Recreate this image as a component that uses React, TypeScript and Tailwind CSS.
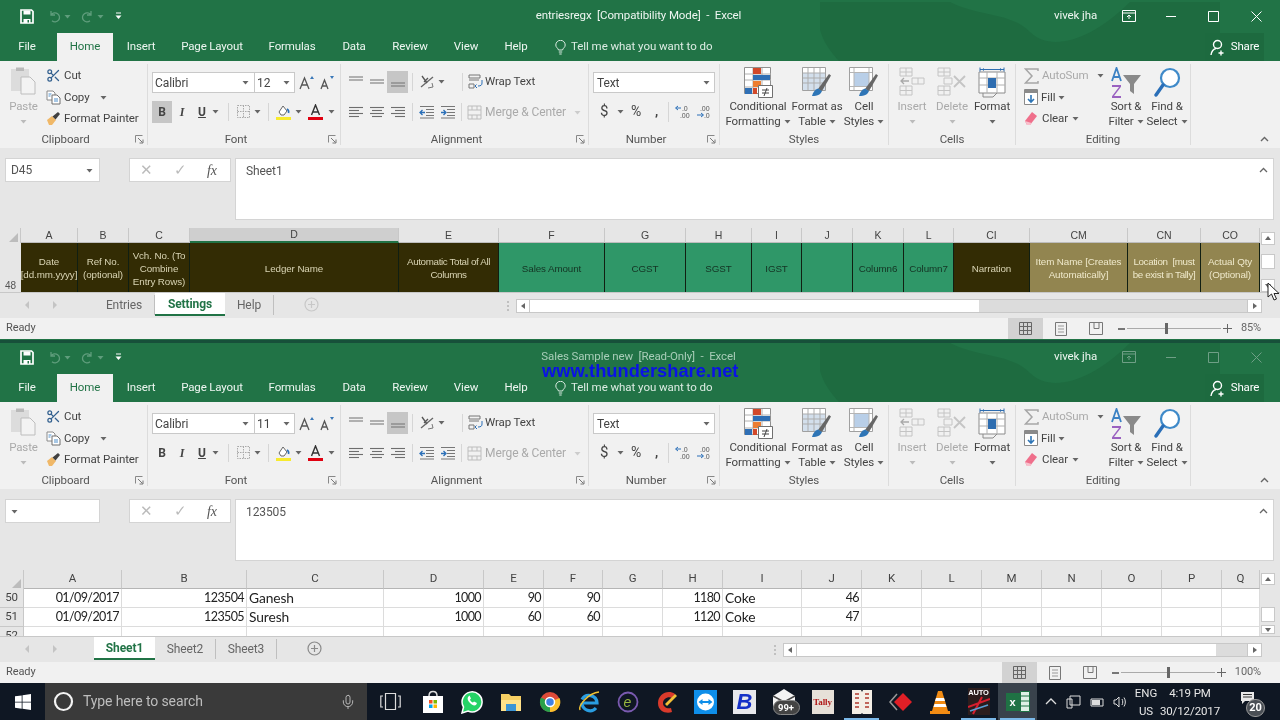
import React from "react";
import { Scissors, Mic } from "lucide-react";

const Caret = ({ c = "#666" }: { c?: string }) => (
  <svg width="7" height="5" viewBox="0 0 7 5" className="shrink-0"><path d="M0.5 1h6L3.5 4.5z" fill={c} /></svg>
);
const Launcher = () => (
  <svg width="9" height="9" viewBox="0 0 9 9" className="shrink-0"><path d="M.5.5h7M.5.5v7" stroke="#888" fill="none" /><path d="M3 3l4.5 4.5M4.5 8h3.5V4.5" stroke="#777" fill="none" /></svg>
);

const Lines = ({ kind, w = 16 }: { kind: string; w?: number }) => {
  const rows: Record<string, [number, number][]> = {
    l: [[1, 15], [1, 11], [1, 15], [1, 11]],
    c: [[1, 15], [3, 13], [1, 15], [3, 13]],
    r: [[1, 15], [5, 15], [1, 15], [5, 15]],
  };
  return (
    <svg width={w} height="14" viewBox="0 0 16 14" className="shrink-0">
      {rows[kind].map((r, i) => <path key={i} d={`M${r[0]} ${2.5 + i * 3}H${r[1]}`} stroke="#6e6e6e" strokeWidth="1.1" />)}
    </svg>
  );
};
const VAlign = ({ pos }: { pos: number }) => (
  <svg width="16" height="16" viewBox="0 0 16 16" className="shrink-0">
    <path d={`M1 ${pos}H15M1 ${pos + 3}H15`} stroke="#707070" strokeWidth="1.2" />
  </svg>
);
const Indent = ({ right }: { right?: boolean }) => (
  <svg width="16" height="14" viewBox="0 0 16 14" className="shrink-0">
    <path d="M1 1.5H15M7 4.5H15M7 7.5H15M7 10.5H15M1 13H15" stroke="#777" />
    {right ? <path d="M1 7.5H5M3.5 5l2.5 2.5L3.5 10" stroke="#2a6fb8" strokeWidth="1.3" fill="none" /> : <path d="M6 7.5H1.5M3.5 5L1 7.5 3.5 10" stroke="#2a6fb8" strokeWidth="1.3" fill="none" />}
  </svg>
);
const Save = () => (
  <svg width="14" height="15" viewBox="0 0 14 15"><path d="M1 1h10.5L13 2.5V14H1z" fill="none" stroke="#fff" strokeWidth="1.7" /><path d="M3.5 1.5h7v4h-7zM3.5 10h7v4h-7z" fill="#fff" /><path d="M7.5 11h1.5v2.5H7.5z" fill="#217346" /></svg>
);
const Undo = ({ flip }: { flip?: boolean }) => (
  <svg width="13" height="13" viewBox="0 0 13 13" className={flip ? "-scale-x-100" : ""}><path d="M3 1v4h4M3.2 5A4.5 4.5 0 1 1 4 10.7" fill="none" stroke="#5f9d7c" strokeWidth="1.3" /></svg>
);
const Qat = () => (
  <svg width="7" height="8" viewBox="0 0 7 8"><path d="M1 1h5" stroke="#fff" /><path d="M.5 3.5h6L3.5 7z" fill="#fff" /></svg>
);
const Bulb = () => (
  <svg width="11" height="15" viewBox="0 0 11 15" className="shrink-0"><path d="M3.5 10C3 8 .8 7.5.8 5a4.7 4.7 0 0 1 9.4 0c0 2.5-2.2 3-2.7 5zM3.8 12h3.4M4.3 14h2.4" fill="none" stroke="#dcece3" /></svg>
);
const Person = () => (
  <svg width="16" height="17" viewBox="0 0 16 17" className="shrink-0"><circle cx="7.5" cy="5.5" r="4" fill="none" stroke="#fff" strokeWidth="1.4" /><path d="M1 16c.3-3.5 2.7-6.2 5-6.5M11 11.5v5M8.5 14h5" fill="none" stroke="#fff" strokeWidth="1.4" /></svg>
);
const PasteIcon = () => (
  <svg width="28" height="30" viewBox="0 0 28 30"><path d="M1 3h18v22H1z" fill="#dcdcdc" /><path d="M6 1.5h8V5H6z" fill="#b9b9b9" /><path d="M11 11h9l5 5v12H11z" fill="#f3f3f3" stroke="#bdbdbd" /></svg>
);
const CopyIcon = () => (
  <svg width="15" height="15" viewBox="0 0 15 15" className="shrink-0"><path d="M1 1h6l2 2v7H1z" fill="#fff" stroke="#8a8a8a" /><path d="M6 5h5l3 3v6H6z" fill="#fff" stroke="#6f6f6f" /><path d="M8 9h4M8 11h4M2.500 4h3M2.500 6h2" stroke="#4f8fcb" /></svg>
);
const Painter = () => (
  <svg width="15" height="15" viewBox="0 0 15 15" className="shrink-0"><path d="M1 9l5-4 4 4-4 5H3z" fill="#f0b868" /><path d="M6.500 5.500L12 1l2 2-4.500 5.500z" fill="#404040" /></svg>
);
const Borders = () => (
  <svg width="15" height="15" viewBox="0 0 15 15" className="shrink-0"><path d="M1.500 1.500h12v12h-12z" fill="none" stroke="#a9a9a9" strokeDasharray="1.500 1" /><path d="M7.500 1.500v12M1.500 7.500h12" stroke="#a9a9a9" strokeDasharray="1.500 1" /></svg>
);
const Fill = () => (
  <svg width="15" height="16" viewBox="0 0 15 16" className="shrink-0"><path d="M3 8l4-6 4 5-3 4H5z" fill="#fff" stroke="#666" /><path d="M11 5c1.500 1 2 2.500 1.500 4" stroke="#2a6fb8" strokeWidth="1.6" fill="none" /><path d="M0 13h15v3H0z" fill="#f7ea2d" /></svg>
);
const FontColor = () => (
  <svg width="15" height="16" viewBox="0 0 15 16" className="shrink-0"><path d="M3.500 11L7.500 1l4 10M5 8h5" fill="none" stroke="#333" strokeWidth="1.400" /><path d="M0 13h15v3H0z" fill="#e00010" /></svg>
);
const GrowA = ({ up }: { up?: boolean }) => (
  <svg width="16" height="15" viewBox="0 0 16 15" className="shrink-0"><path d={up ? "M1 14L5.500 3 10 14M3 10h5" : "M2 14L5.500 5 9 14M3.500 11h4"} fill="none" stroke="#555" strokeWidth="1.300" /><path d={up ? "M11 4l2-3 2 3z" : "M11 1l2 3 2-3z"} fill="#3a78b8" /></svg>
);
const Orient = () => (
  <svg width="16" height="16" viewBox="0 0 16 16" className="shrink-0"><path d="M2 13L14 3" stroke="#666" strokeWidth="1.300" /><path d="M3 2l5 7M5 8l4-4" stroke="#555" strokeWidth="1.300" /><path d="M9 14l5-1-1-4" stroke="#777" fill="none" /></svg>
);
const WrapIcon = () => (
  <svg width="16" height="15" viewBox="0 0 16 15" className="shrink-0"><path d="M1 1h11v3H1zM1 6h10M1 10h5v4H1z" fill="none" stroke="#777" /><path d="M10 12c3 0 4-1 4-3V6M8.500 10.500L7 12l2 2" fill="none" stroke="#2a6fb8" /></svg>
);
const MergeIcon = () => (
  <svg width="15" height="15" viewBox="0 0 15 15" className="shrink-0"><path d="M1 1h13v13H1zM1 5h13M1 10h13M5 1v4M10 1v4M5 10v4M10 10v4" fill="none" stroke="#bdbdbd" /></svg>
);
const DecLeft = () => (
  <svg width="18" height="15" viewBox="0 0 18 15" className="shrink-0"><text x="8" y="6.500" fontSize="7" fill="#555" fontFamily="Liberation Sans">.0</text><text x="6" y="14" fontSize="7" fill="#555" fontFamily="Liberation Sans">.00</text><path d="M7 4H2M4 2L1.500 4 4 6" stroke="#2a6fb8" fill="none" /></svg>
);
const DecRight = () => (
  <svg width="18" height="15" viewBox="0 0 18 15" className="shrink-0"><text x="5" y="6.500" fontSize="7" fill="#555" fontFamily="Liberation Sans">.00</text><text x="9" y="14" fontSize="7" fill="#555" fontFamily="Liberation Sans">.0</text><path d="M2 11h6M6 9l2.500 2L6 13" stroke="#2a6fb8" fill="none" /></svg>
);
const CF = () => (
  <svg width="29" height="31" viewBox="0 0 29 31">
    <path d="M.5.5h26v26H.5z" fill="#fff" stroke="#909090" />
    <path d="M9 1v26M18 1v26M1 7h26M1 13h26M1 20h26" stroke="#b0b0b0" />
    <path d="M9 1h8v6H9z" fill="#d2492a" /><path d="M9 8h17v5H9z" fill="#2f6fb5" /><path d="M9 14h8v6H9z" fill="#ed7d31" /><path d="M9 21h4v6H9z" fill="#d2492a" /><path d="M1 21h7v6H1z" fill="#2f6fb5" />
    <path d="M14.500 18.500h14v12h-14z" fill="#fff" stroke="#707070" /><path d="M18 23h7M18 26h7M23 21l-3 8" stroke="#444" />
  </svg>
);
const TableBrush = ({ cell }: { cell?: boolean }) => (
  <svg width="30" height="30" viewBox="0 0 30 30">
    <path d="M.5.500h23v23H.5z" fill="#fff" stroke="#a0a0a0" />
    {cell ? <path d="M5 6h15v13H5z" fill="#b9cfe8" /> : <path d="M1 6h22v17H1z" fill="#d3dfec" />}
    {cell ? <path d="M1 5.500h22M1 19.500h22M5 1v22M20 1v22" stroke="#b5b5b5" /> : <path d="M1 6h22M1 11h22M1 16h22M6 1v22M12 1v22M18 1v22" stroke="#adadad" />}
    <path d="M16 22L27 7l2 1.500L20 24z" fill="#666" />
    <path d="M10 29c1-4 3-6.500 6-7.500l4 2.500c-1 3-4 5-10 5z" fill="#2e75b6" />
  </svg>
);
const InsertI = () => (
  <svg width="26" height="29" viewBox="0 0 26 29"><path d="M1 1h12v8H1zM1 5h12M7 1v8M1 19h12v9H1zM1 23.500h12M7 19v9M13 11h12v6H13zM19 11v6" fill="none" stroke="#c4c4c4" /><path d="M10 14H2M5 11l-3 3 3 3" fill="none" stroke="#a9a9a9" strokeWidth="1.300" /></svg>
);
const DeleteI = () => (
  <svg width="30" height="29" viewBox="0 0 30 29"><path d="M1 1h12v8H1zM1 5h12M7 1v8M1 19h12v9H1zM1 23.500h12M7 19v9M7 11h8v6H7z" fill="none" stroke="#c4c4c4" /><path d="M17 9l11 11M28 9L17 20" stroke="#c4c4c4" strokeWidth="1.800" /></svg>
);
const FormatI = () => (
  <svg width="28" height="32" viewBox="0 0 28 32"><path d="M1 5h26v21H1z" fill="#fff" stroke="#8b8b8b" /><path d="M9 5v21M19 5v21M1 11h26M1 18h26" stroke="#b0b0b0" /><path d="M10 11h8v10h-8z" fill="#2e6db0" /><path d="M2 2.500h24M2 .5v4M26 .5v4" stroke="#2e6db0" /><path d="M4 2.500l2-1.500v3zM24 2.500l-2-1.500v3z" fill="#2e6db0" /><path d="M5 26v4h10l4-4" fill="none" stroke="#8b8b8b" /></svg>
);
const Sigma = () => (
  <svg width="15" height="16" viewBox="0 0 15 16" className="shrink-0"><path d="M14 3V1H1.500L8 8 1.500 15H14v-2" fill="none" stroke="#a6a6a6" strokeWidth="1.500" /></svg>
);
const FillDown = () => (
  <svg width="14" height="16" viewBox="0 0 14 16" className="shrink-0"><path d="M.5.5h13v15H.5z" fill="#fff" stroke="#8a8a8a" /><path d="M1 1h12v3H1z" fill="#8a8a8a" /><path d="M7 6v7M4 10l3 3 3-3" fill="none" stroke="#2e75b6" strokeWidth="1.600" /></svg>
);
const Eraser = () => (
  <svg width="14" height="15" viewBox="0 0 14 15" className="shrink-0"><path d="M1 10l7-9 5 4-7 9H3z" fill="#ef6f8b" /><path d="M1 10l2 4h3l1.500-2z" fill="#f8c0cc" /></svg>
);
const SortI = () => (
  <svg width="32" height="32" viewBox="0 0 32 32"><path d="M2 14L6.500 1 11 14M3.500 10h6" fill="none" stroke="#3c82c4" strokeWidth="1.800" /><path d="M2 18h9v1.800L4 29h7v2H2v-1.800L9 20H2z" fill="#9a62c0" /><path d="M13 8h18l-7 9v10l-4-3v-7z" fill="#8a8a8a" /></svg>
);
const FindI = () => (
  <svg width="27" height="32" viewBox="0 0 27 32"><circle cx="16" cy="11" r="9" fill="#fff" stroke="#3f8ac9" strokeWidth="2.200" /><path d="M9 18L2 28" stroke="#2a6fb8" strokeWidth="3.400" strokeLinecap="round" /></svg>
);

function Group({ w, label, launcher, children }: { w: string; label: string; launcher?: boolean; children: React.ReactNode }) {
  return (
    <div className={`${w} shrink-0 border-r border-[#dcdcdc] mt-[3px] mb-[3px] flex flex-col`}>
      <div className="h-[70px] shrink-0">{children}</div>
      <div className="h-[11px] shrink-0 flex items-center relative">
        <div className={`flex-1 text-center text-[#555] text-[11.5px] leading-none ${launcher ? "pr-[16px]" : ""}`}>{label}</div>
        {launcher ? <div className="absolute right-[3px] top-[1px]"><Launcher /></div> : null}
      </div>
    </div>
  );
}

function Big({ w, icon, l1, l2, caret, muted }: { w: string; icon: React.ReactNode; l1: string; l2?: string; caret?: boolean; muted?: boolean }) {
  const color = muted ? "text-[#aaa]" : "text-[#444]";
  return (
    <div className={`${w} flex flex-col items-center`}>
      <div className="h-[35px] pt-[3px] flex items-start justify-center">{icon}</div>
      <div className={`${color} text-[11.5px] leading-[15px] h-[15px] whitespace-nowrap`}>{l1}</div>
      <div className={`${color} text-[11.5px] leading-[15px] h-[15px] whitespace-nowrap flex items-center gap-[3px]`}>
        {l2}{caret ? <Caret c={muted ? "#bbb" : "#666"} /> : null}
      </div>
    </div>
  );
}

function Ribbon({ size, bold }: { size: string; bold?: boolean }) {
  return (
    <div className="h-[87px] bg-[#f1f1f1] flex text-[#444] relative">
      <Group w="w-[148px]" label="Clipboard" launcher>
        <div className="flex h-full">
          <div className="w-[46px] flex flex-col items-center pl-[1px] pt-[2px]">
            <PasteIcon />
            <div className="text-[#aaa] text-[11.5px] leading-[15px] mt-[3px]">Paste</div>
            <div className="mt-[5px]"><Caret c="#bbb" /></div>
          </div>
          <div className="flex-1 flex flex-col pt-[1px]">
            <div className="h-[21.500px] flex items-center gap-[3px] text-[11.500px]"><Scissors size={15} color="#33608f" />Cut</div>
            <div className="h-[21.500px] flex items-center gap-[3px] text-[11.500px]"><CopyIcon />Copy<span className="ml-[8px]"><Caret /></span></div>
            <div className="h-[21.500px] flex items-center gap-[3px] text-[11.500px] whitespace-nowrap"><Painter />Format Painter</div>
          </div>
        </div>
      </Group>
      <Group w="w-[193px]" label="Font" launcher>
        <div className="pl-[4px]">
          <div className="h-[30px] pt-[7px] flex items-center">
            <div className="w-[103px] h-[21px] bg-white border border-[#c9c9c9] flex items-center justify-between px-[2px] pr-[5px] text-[12px]">Calibri<Caret /></div>
            <div className="w-[40px] h-[21px] bg-white border border-l-0 border-[#c9c9c9] flex items-center justify-between pl-[2px] pr-[4px] text-[12px]">{size}<Caret /></div>
            <div className="ml-[4px]"><GrowA up /></div>
            <div className="ml-[4px]"><GrowA /></div>
          </div>
          <div className="h-[33px] flex items-center pt-[2px]">
            <div className={`w-[20px] h-[22px] flex items-center justify-center font-bold text-[12px] ${bold ? "bg-[#c6c6c6]" : ""}`}>B</div>
            <div className="w-[20px] text-center italic font-bold text-[12px] font-['Liberation_Serif',serif]">I</div>
            <div className="w-[20px] text-center underline font-bold text-[12px]">U</div>
            <div className="w-[9px]"><Caret /></div>
            <div className="w-px h-[18px] bg-[#d6d6d6] mx-[7px]" />
            <Borders />
            <div className="ml-[3px]"><Caret /></div>
            <div className="w-px h-[18px] bg-[#d6d6d6] mx-[7px]" />
            <Fill />
            <div className="ml-[4px]"><Caret /></div>
            <div className="ml-[6px]"><FontColor /></div>
            <div className="ml-[5px]"><Caret /></div>
          </div>
        </div>
      </Group>
      <Group w="w-[248px]" label="Alignment" launcher>
        <div className="pl-[4px]">
          <div className="h-[30px] pt-[5px] flex items-center">
            <div className="w-[21px] flex justify-center"><VAlign pos={3} /></div>
            <div className="w-[21px] flex justify-center"><VAlign pos={6} /></div>
            <div className="w-[21px] h-[22px] bg-[#c6c6c6] flex justify-center items-center"><VAlign pos={9} /></div>
            <div className="w-px h-[18px] bg-[#d6d6d6] ml-[4px] mr-[6px]" />
            <Orient />
            <div className="ml-[3px]"><Caret /></div>
            <div className="w-px h-[18px] bg-[#d6d6d6] ml-[17px] mr-[5px]" />
            <WrapIcon />
            <span className="text-[11.500px] ml-[1px]">Wrap Text</span>
          </div>
          <div className="h-[33px] pt-[3px] flex items-center">
            <div className="w-[21px] flex justify-center"><Lines kind="l" /></div>
            <div className="w-[21px] flex justify-center"><Lines kind="c" /></div>
            <div className="w-[21px] flex justify-center"><Lines kind="r" /></div>
            <div className="w-px h-[18px] bg-[#d6d6d6] ml-[4px] mr-[6px]" />
            <Indent />
            <div className="ml-[5px]"><Indent right /></div>
            <div className="w-px h-[18px] bg-[#d6d6d6] ml-[5px] mr-[5px]" />
            <MergeIcon />
            <span className="text-[12px] text-[#aaa] ml-[3px] whitespace-nowrap">Merge &amp; Center</span>
            <span className="ml-[8px]"><Caret c="#ccc" /></span>
          </div>
        </div>
      </Group>
      <Group w="w-[131px]" label="Number" launcher>
        <div className="pl-[4px]">
          <div className="h-[30px] pt-[7px] flex items-center">
            <div className="w-[122px] h-[21px] bg-white border border-[#c9c9c9] flex items-center justify-between px-[3px] pr-[4px] text-[12px]">Text<Caret /></div>
          </div>
          <div className="h-[33px] pt-[2px] flex items-center">
            <span className="ml-[7px] text-[15px] w-[11px]">$</span>
            <span className="ml-[6px]"><Caret /></span>
            <span className="ml-[7px] text-[14px] w-[14px]">%</span>
            <span className="ml-[10px] w-[4px] font-bold text-[13px] leading-none">,</span>
            <div className="w-px h-[20px] bg-[#d6d6d6] ml-[9px] mr-[5px]" />
            <DecLeft />
            <span className="ml-[3px]"><DecRight /></span>
          </div>
        </div>
      </Group>
      <Group w="w-[169px]" label="Styles">
        <div className="flex pl-[4px]">
          <Big w="w-[68px]" icon={<CF />} l1="Conditional" l2="Formatting" caret />
          <Big w="w-[50px]" icon={<TableBrush />} l1="Format as" l2="Table" caret />
          <Big w="w-[44px]" icon={<TableBrush cell />} l1="Cell" l2="Styles" caret />
        </div>
      </Group>
      <Group w="w-[127px]" label="Cells">
        <div className="flex pl-[3px]">
          <Big w="w-[40px]" icon={<InsertI />} l1="Insert" caret muted />
          <Big w="w-[40px]" icon={<DeleteI />} l1="Delete" caret muted />
          <Big w="w-[40px]" icon={<FormatI />} l1="Format" caret />
        </div>
      </Group>
      <Group w="w-[175px]" label="Editing">
        <div className="flex pl-[8px]">
          <div className="w-[82px] flex flex-col text-[11.500px] pt-[1px]">
            <div className="h-[21.500px] flex items-center gap-[3px] text-[#aaa]"><Sigma />AutoSum<span className="ml-[5px]"><Caret /></span></div>
            <div className="h-[21.500px] flex items-center gap-[3px]"><FillDown />Fill<Caret /></div>
            <div className="h-[21.500px] flex items-center gap-[4px]"><Eraser />Clear<Caret /></div>
          </div>
          <Big w="w-[40px]" icon={<SortI />} l1="Sort &" l2="Filter" caret />
          <Big w="w-[42px]" icon={<FindI />} l1="Find &" l2="Select" caret />
        </div>
      </Group>
      <div className="flex-1 flex items-end justify-end pr-[11px] pb-[6px]">
        <svg width="9" height="6" viewBox="0 0 9 6"><path d="M1 5l3.500-3.500L8 5" fill="none" stroke="#666" strokeWidth="1.400" /></svg>
      </div>
    </div>
  );
}

function TitleBar({ title, inactive }: { title: string; inactive?: boolean }) {
  const icon = inactive ? "#6f9f86" : "#ffffff";
  return (
    <div className="h-[31px] flex items-center pb-[3px] text-[11.5px] relative">
      <svg className="absolute left-[820px] top-0 pointer-events-none" width="400" height="60" viewBox="0 0 400 60">
        <path d="M0 0h130c30 15 60 10 80 30 20 20 60 10 100-30h90v60H20C0 40-5 20 0 0z" fill="#1e6b40" />
      </svg>
      <div className="w-[130px] shrink-0 flex items-center pl-[20px] relative">
        <Save />
        <span className="ml-[14px]"><Undo /></span><span className="ml-[3px]"><Caret c="#5f9d7c" /></span>
        <span className="ml-[10px]"><Undo flip /></span><span className="ml-[3px]"><Caret c="#5f9d7c" /></span>
        <span className="ml-[11px]"><Qat /></span>
      </div>
      <div className={`flex-1 pl-[102px] text-center relative whitespace-pre ${inactive ? "text-[#a8cdb8]" : "text-[#eef6f1]"}`}>{title}</div>
      <div className="w-[235px] shrink-0 flex items-center relative text-[#eef6f1]">
        <span className="ml-[9px] w-[51px]">vivek jha</span>
        <svg className="ml-[17px]" width="14" height="12" viewBox="0 0 14 12"><path d="M.5.5h13v11H.5zM1 3h12" fill="none" stroke={icon} /><path d="M7 9V5M5 7l2-2 2 2" fill="none" stroke={icon} /></svg>
        <svg className="ml-[29px]" width="12" height="3" viewBox="0 0 12 3"><path d="M1 1.500h10" stroke={icon} /></svg>
        <svg className="ml-[31px]" width="11" height="11" viewBox="0 0 11 11"><path d="M.5.5h10v10H.5z" fill="none" stroke={icon} /></svg>
        <svg className="ml-[32px]" width="11" height="11" viewBox="0 0 11 11"><path d="M.5.5l10 10M10.500.5l-10 10" stroke={icon} /></svg>
      </div>
    </div>
  );
}

function TabRow() {
  const tabs: [string, string][] = [["Insert", "w-[56px]"], ["Page Layout", "w-[86px]"], ["Formulas", "w-[74px]"], ["Data", "w-[50px]"], ["Review", "w-[62px]"], ["View", "w-[50px]"], ["Help", "w-[50px]"]];
  return (
    <div className="h-[28px] flex items-stretch text-[11.500px] tracking-[-0.15px] text-[#eef6f1] relative">
      <div className="w-[57px] flex items-center justify-center pr-[3px]">File</div>
      <div className="w-[56px] flex items-center justify-center bg-[#f1f1f1] text-[#217346]">Home</div>
      {tabs.map(([t, w]) => <div key={t} className={`${w} flex items-center justify-center`}>{t}</div>)}
      <div className="ml-[14px] flex items-center gap-[5px] whitespace-nowrap"><Bulb /><span className="text-[#dcece3] tracking-[-0.05px]">Tell me what you want to do</span></div>
      <div className="flex-1" />
      <div className="w-[59px] mr-[16px] bg-[#1d6a3f] flex items-center justify-center gap-[5px] text-white"><Person />Share</div>
    </div>
  );
}

function FormulaArea({ name, value, h }: { name: string; value: string; h: string }) {
  return (
    <div className={`${h} bg-[#e6e6e6] pt-[10px] px-[5px] flex items-start text-[#555]`}>
      <div className="w-[95px] h-[24px] bg-white border border-[#d4d4d4] flex items-center justify-between px-[5px] pr-[6px] text-[12px]">{name}<Caret /></div>
      <div className="w-[102px] h-[24px] ml-[29px] bg-white border border-[#d4d4d4] flex items-center text-[#bbb]">
        <span className="ml-[10px] text-[15px] w-[10px]">✕</span>
        <span className="ml-[24px] text-[15px] w-[10px]">✓</span>
        <span className="ml-[23px] italic font-['Liberation_Serif',serif] text-[14px] text-[#555]">fx</span>
      </div>
      <div className="flex-1 h-[62px] ml-[4px] bg-white border border-[#d4d4d4] flex justify-between pl-[10px] pr-[5px] pt-[3px] text-[12px] text-[#555] mr-[1px]">
        <span>{value}</span>
        <svg className="mt-[5px]" width="9" height="6" viewBox="0 0 9 6"><path d="M1 5l3.500-3.500L8 5" fill="none" stroke="#666" strokeWidth="1.300" /></svg>
      </div>
    </div>
  );
}

function SheetArrow({ dir }: { dir: "u" | "d" | "l" | "r" }) {
  const d = { u: "M1 5h6L4 1z", d: "M1 1h6L4 5z", l: "M5 1v6L1 4z", r: "M1 1v6l4-3z" }[dir];
  const s = dir === "u" || dir === "d" ? [8, 6] : [6, 8];
  return <svg width={s[0]} height={s[1]} viewBox={`0 0 ${s[0]} ${s[1]}`}><path d={d} fill="#666" /></svg>;
}

function Corner() {
  return <svg width="9" height="9" viewBox="0 0 9 9"><path d="M9 0v9H0z" fill="#bcbcbc" /></svg>;
}

const W1Cols = ["A", "B", "C", "D", "E", "F", "G", "H", "I", "J", "K", "L", "CI", "CM", "CN", "CO"];
const W1Cells: [string, string][] = [
  ["Date\n[dd.mm.yyyy]", "d"], ["Ref No.\n(optional)", "d"], ["Vch. No. (To\nCombine\nEntry Rows)", "d"], ["Ledger Name", "d"], ["Automatic Total of All\nColumns", "d"],
  ["Sales Amount", "g"], ["CGST", "g"], ["SGST", "g"], ["IGST", "g"], ["", "g"], ["Column6", "g"], ["Column7", "g"],
  ["Narration", "d"], ["Item Name [Creates\nAutomatically]", "t"], ["Location\u00a0\u00a0[must\nbe exist in Tally]", "t"], ["Actual Qty\n(Optional)", "t"],
];

function Grid1() {
  return (
    <div className="h-[64px] flex bg-[#e6e6e6] relative">
      <div className="w-[1260px] grid grid-cols-[21px_57px_51px_61px_209px_100px_106px_81px_66px_50px_51px_51px_50px_76px_98px_73px_59px] grid-rows-[15px_49px]">
        <div className="flex items-end justify-end pr-[2px] pb-[1px] border-r border-[#c8c8c8]"><Corner /></div>
        {W1Cols.map((c) => (
          <div key={c} className={`flex items-center justify-center pt-[1px] text-[10.500px] text-[#444] font-['Liberation_Sans',sans-serif] border-r border-[#c8c8c8] ${c === "D" ? "bg-[#cfcfcf] border-b-2 border-b-[#217346]" : "border-b border-b-[#bdbdbd]"}`}>{c}</div>
        ))}
        <div className="flex items-end justify-center text-[10px] text-[#555] font-['Liberation_Sans',sans-serif] leading-none pb-[1px]">48</div>
        {W1Cells.map(([t, k], i) => (
          <div key={i} className={`flex items-center justify-center text-center pt-[1px] whitespace-pre-line text-[9.800px] leading-[13px] font-['Liberation_Sans',sans-serif] border-r border-[#111f12] ${t.startsWith("Automatic") || t.startsWith("Location") ? "tracking-[-0.35px]" : "tracking-[-0.1px]"} ${k === "d" ? "bg-[#332c04] text-[#d9d4b4]" : k === "g" ? "bg-[#2f9768] text-[#143323]" : "bg-[#928550] text-[#efe9cb]"}`}>{t}</div>
        ))}
      </div>
      <div className="flex-1 flex flex-col items-center pt-[4px] pr-[4px]">
        <div className="w-[14px] h-[13px] bg-white border border-[#c8c8c8] flex items-center justify-center"><SheetArrow dir="u" /></div>
        <div className="w-[14px] h-[16px] mt-[9px] bg-white border border-[#c8c8c8]" />
        <div className="w-[14px] h-[13px] mt-[10px] bg-white border border-[#c8c8c8] flex items-center justify-center"><SheetArrow dir="d" /></div>
      </div>
      <svg className="absolute left-[1267px] top-[54px] z-10" width="13" height="19" viewBox="0 0 13 19"><path d="M1 1v14l3.500-3 2.500 6 2.500-1-2.500-5.500h5z" fill="#fff" stroke="#222" /></svg>
    </div>
  );
}

const W2Cols = ["A", "B", "C", "D", "E", "F", "G", "H", "I", "J", "K", "L", "M", "N", "O", "P", "Q"];
const W2Rows: [string, string[]][] = [
  ["50", ["01/09/2017", "123504", "Ganesh", "1000", "90", "90", "", "1180", "Coke", "46", "", "", "", "", "", "", ""]],
  ["51", ["01/09/2017", "123505", "Suresh", "1000", "60", "60", "", "1120", "Coke", "47", "", "", "", "", "", "", ""]],
  ["52", ["", "", "", "", "", "", "", "", "", "", "", "", "", "", "", "", ""]],
];

function Grid2() {
  return (
    <div className="h-[66px] flex bg-[#e6e6e6] overflow-hidden">
      <div className="w-[1260px] grid grid-cols-[24px_98px_125px_137px_100px_60px_59px_60px_60px_79px_60px_60px_60px_60px_60px_60px_60px_38px] grid-rows-[19px_19px_19px_19px]">
        <div className="flex items-end justify-end pr-[2px] pb-[1px] border-r border-[#c8c8c8]"><Corner /></div>
        {W2Cols.map((c) => (
          <div key={c} className="flex items-center justify-center text-[11.500px] text-[#444] border-r border-[#c8c8c8] border-b border-b-[#b5b5b5]">{c}</div>
        ))}
        {W2Rows.map(([n, cells]) => (
          <React.Fragment key={n}>
            <div className="flex items-center justify-center text-[11.500px] text-[#444] border-r border-[#c8c8c8] border-b border-b-[#c8c8c8]">{n}</div>
            {cells.map((c, i) => (
              <div key={i} className={`bg-white border-r border-b border-[#dcdcdc] flex items-center text-[#222] font-['Lato',sans-serif] px-[2px] ${c === "Ganesh" || c === "Suresh" || c === "Coke" ? "justify-start text-[13.800px] tracking-[-0.1px]" : "justify-end text-[12.500px] tracking-[-0.6px]"}`}>{c}</div>
            ))}
          </React.Fragment>
        ))}
      </div>
      <div className="flex-1 flex flex-col items-center pt-[3px] pr-[4px]">
        <div className="w-[14px] h-[12px] bg-white border border-[#c8c8c8] flex items-center justify-center"><SheetArrow dir="u" /></div>
        <div className="w-[14px] h-[15px] mt-[22px] bg-white border border-[#c8c8c8]" />
        <div className="w-[14px] h-[9px] mt-[3px] bg-white border border-[#c8c8c8] flex items-center justify-center overflow-hidden"><SheetArrow dir="d" /></div>
      </div>
    </div>
  );
}

function SheetBar({ tabs, active, leftW, scrollW, thumbW, faded }: { tabs: string[]; active: string; leftW: string; scrollW: string; thumbW: string; faded?: boolean }) {
  return (
    <div className="h-[26px] bg-[#e6e6e6] flex items-center text-[12px] text-[#666] border-t border-[#c8c8c8]">
      <div className={`${leftW} shrink-0 flex items-stretch h-[23px] self-start`}>
        <div className="w-[94px] flex items-center pl-[25px] gap-[22px] text-[#bbb]">
          <svg width="5" height="8" viewBox="0 0 5 8"><path d="M4 0v8L0 4z" fill="#c4c4c4" /></svg>
          <svg width="5" height="8" viewBox="0 0 5 8"><path d="M1 0v8l4-4z" fill="#c4c4c4" /></svg>
        </div>
        {tabs.map((t) => (
          t === active ? (
            <div key={t} className={`${t === "Settings" ? "w-[70px]" : "w-[61px]"} bg-white border-b-2 border-[#217346] text-[#217346] font-bold flex items-center justify-center`}>{t}</div>
          ) : (
            <div key={t} className={`${t === "Help" ? "w-[49px]" : "w-[61px]"} flex items-center justify-center`}><span className="border-r border-[#bfbfbf] w-full text-center leading-[20px]">{t}</span></div>
          )
        ))}
        <div className="ml-[30px] flex items-center">
          <svg width="15" height="15" viewBox="0 0 15 15"><circle cx="7.500" cy="7.500" r="6.500" fill="none" stroke={faded ? "#c8c8c8" : "#8a8a8a"} strokeWidth="1.200" /><path d="M7.500 4v7M4 7.500h7" stroke={faded ? "#c8c8c8" : "#8a8a8a"} strokeWidth="1.200" /></svg>
        </div>
      </div>
      <div className="w-[16px] shrink-0 flex flex-col items-center gap-[2px]">
        <div className="w-[2px] h-[2px] bg-[#c0c0c0]" /><div className="w-[2px] h-[2px] bg-[#c0c0c0]" /><div className="w-[2px] h-[2px] bg-[#c0c0c0]" />
      </div>
      <div className={`${scrollW} shrink-0 h-[14px] flex bg-[#dcdcdc] border border-[#c8c8c8]`}>
        <div className="w-[13px] bg-white flex items-center justify-center border-r border-[#c8c8c8]"><SheetArrow dir="l" /></div>
        <div className={`${thumbW} bg-white`} />
        <div className="flex-1" />
        <div className="w-[14px] bg-white flex items-center justify-center border-l border-[#c8c8c8]"><SheetArrow dir="r" /></div>
      </div>
    </div>
  );
}

function StatusBar({ pct, pctW, thumb }: { pct: string; pctW: string; thumb: string }) {
  return (
    <div className="h-[21px] bg-[#f1f1f1] flex items-center text-[11px] text-[#555]">
      <span className="pl-[6px]">Ready</span>
      <div className="flex-1" />
      <div className="h-full w-[35px] bg-[#d2d2d2] flex items-center justify-center">
        <svg width="13" height="13" viewBox="0 0 13 13"><path d="M.5.5h12v12H.5zM4.500.5v12M8.500.5v12M.5 4.500h12M.5 8.500h12" fill="none" stroke="#666" /></svg>
      </div>
      <div className="w-[35px] flex justify-center">
        <svg width="12" height="14" viewBox="0 0 12 14"><path d="M.5.5h11v13H.5z" fill="none" stroke="#777" /><path d="M3 4h6M3 7h6M3 10h6" stroke="#999" /></svg>
      </div>
      <div className="w-[35px] flex justify-center">
        <svg width="14" height="13" viewBox="0 0 14 13"><path d="M.5.5h13v12H.5zM5 .5v6h5v-6" fill="none" stroke="#777" /></svg>
      </div>
      <div className="w-[114px] flex items-center ml-[5px]">
        <div className="w-[7px] h-[2px] bg-[#777]" />
        <div className="flex-1 h-px bg-[#aaa] mx-[2px] relative">
          <div className={`absolute ${thumb} -top-[5px] w-[3px] h-[11px] bg-[#666]`} />
        </div>
        <div className="w-[9px] h-[9px] relative"><div className="absolute top-[4px] w-[9px] h-px bg-[#666]" /><div className="absolute left-[4px] w-px h-[9px] bg-[#666]" /></div>
      </div>
      <div className={`${pctW} text-right pr-[19px] text-[#666]`}>{pct}</div>
    </div>
  );
}

const WinLogo = () => (
  <svg width="16" height="16" viewBox="0 0 16 16"><path d="M0 2.300l6.700-.9v6.300H0zM7.500 1.300L16 0v7.700H7.500zM0 8.500h6.700v6.200L0 13.800zM7.500 8.500H16V16l-8.500-1.200z" fill="#fff" /></svg>
);
function AppIcon(k: string) {
  switch (k) {
    case "store": return <svg width="22" height="24" viewBox="0 0 22 24"><path d="M7 6c0-6 8-6 8 0" fill="none" stroke="#ddd" strokeWidth="1.500" /><path d="M1 6h20v17H1z" fill="#fff" /><path d="M7 10h3.500v3.500H7z" fill="#f25022" /><path d="M11.500 10H15v3.500h-3.500z" fill="#7fba00" /><path d="M7 14.500h3.500V18H7z" fill="#00a4ef" /><path d="M11.500 14.500H15V18h-3.500z" fill="#ffb900" /></svg>;
    case "wa": return <svg width="22" height="24" viewBox="0 0 22 24"><path d="M1 23l1.500-6A10 10 0 1 1 7 21z" fill="#25d366" stroke="#fff" strokeWidth="1.500" /><path d="M7 7c-1 2 0 4 2 6s4 3 6 2l1-2-3-1.500-1 1c-1 0-3-2-3-3l1-1-1.500-3z" fill="#fff" /></svg>;
    case "folder": return <svg width="22" height="22" viewBox="0 0 22 22"><path d="M1 3h8l2 2h10v15H1z" fill="#f6cf63" /><path d="M1 9h20v11H1z" fill="#ffe28a" /><path d="M6 13h10v7H6z" fill="#3b95d6" /></svg>;
    case "chrome": return <svg width="22" height="22" viewBox="0 0 22 22"><circle cx="11" cy="11" r="10" fill="#dd4b39" /><path d="M11 11L2 6.500A10 10 0 0 0 11 21z" fill="#2aa14b" /><path d="M11 11v10a10 10 0 0 0 9.500-14z" fill="#fbc02d" /><circle cx="11" cy="11" r="4.500" fill="#3f82e5" stroke="#fff" strokeWidth="1.500" /></svg>;
    case "ie": return <svg width="24" height="24" viewBox="0 0 24 24"><path d="M5 13h15a8 8 0 0 0-15-3.500M5 13a8 8 0 0 0 14 5" fill="none" stroke="#2a9de0" strokeWidth="3.200" /><path d="M3 20C1 15 12 3 22 2" fill="none" stroke="#f1c232" strokeWidth="1.500" /></svg>;
    case "e2": return <svg width="22" height="22" viewBox="0 0 22 22"><circle cx="11" cy="11" r="9.500" fill="none" stroke="#7a5ab0" strokeWidth="1.800" /><text x="6.500" y="16" fontSize="14" fontStyle="italic" fill="#9ab83f" fontFamily="Liberation Sans">e</text></svg>;
    case "cc": return <svg width="22" height="24" viewBox="0 0 22 24"><path d="M19 4C12-1 2 4 2 13s9 11 14 9l-1-4c-4 1-8-1-8-5s5-7 9-5z" fill="#d93a2b" /><path d="M9 14l10-10 2 2-10 10z" fill="#f2c037" /></svg>;
    case "tv": return <svg width="23" height="24" viewBox="0 0 23 24"><path d="M0 0h23v24H0z" fill="#0e8ee9" /><circle cx="11.500" cy="12" r="8.500" fill="#fff" /><path d="M4.500 12l4-3v2h6V9l4 3-4 3v-2h-6v2z" fill="#0e8ee9" /></svg>;
    case "b": return <div className="w-[23px] h-[24px] bg-[#e8e8ec] flex items-center justify-center text-[#1530c8] font-bold italic text-[22px] font-['Liberation_Sans',sans-serif] leading-none">B</div>;
    case "mail": return (
      <div className="relative w-[28px] h-[27px] flex items-start justify-center">
        <svg width="24" height="18" viewBox="0 0 24 18"><path d="M1 8L12 1l11 7v10H1z" fill="#f3f3f3" /><path d="M1 8l11 6 11-6" fill="none" stroke="#444" strokeWidth="1.500" /></svg>
        <span className="absolute left-[3px] top-[12px] w-[27px] h-[15px] rounded-full bg-[#444] border border-[#888] text-white text-[9.500px] font-bold leading-[13px] text-center">99+</span>
      </div>
    );
    case "tally": return <div className="w-[22px] h-[24px] bg-[#e6e0d8] text-[#b01818] font-bold text-[9px] leading-[24px] text-center font-['Liberation_Serif',serif]">Tally</div>;
    case "book": return <svg width="22" height="26" viewBox="0 0 22 26"><path d="M1 1h9l1 2 1-2h9v24h-9l-1-1-1 1H1z" fill="#f4efe6" /><path d="M4 5h4M4 9h4M14 5h4M14 9h4M4 14h4M14 14h4M4 18h4M14 18h4" stroke="#b03a2e" strokeWidth="1.500" /></svg>;
    case "dia": return <svg width="24" height="24" viewBox="0 0 24 24"><path d="M14 3l9 9-9 9-9-9z" fill="#e01f26" /><path d="M8 4l-7 8 7 8" fill="none" stroke="#999" strokeWidth="1.500" /></svg>;
    case "vlc": return <svg width="20" height="24" viewBox="0 0 20 24"><path d="M8 1h4l6 20H2z" fill="#f28c13" /><path d="M6 8h8l1 3H5zM4.500 14h11l1 3H3.500z" fill="#fff" /><path d="M0 21h20v3H0z" fill="#f28c13" /></svg>;
    case "auto": return (
      <div className="relative w-[22px] h-[27px] bg-[#2c1d1d] overflow-hidden">
        <span className="block text-[7.500px] text-white text-center font-bold font-['Liberation_Sans',sans-serif] leading-[9px]">AUTO</span>
        <svg className="absolute top-[8px] left-0" width="22" height="19" viewBox="0 0 22 19"><path d="M0 11L22 3M5 18L14 1" stroke="#d81e2e" strokeWidth="2" /><path d="M2 15L20 9" stroke="#5a9fd6" strokeWidth="1.500" /></svg>
      </div>
    );
    default: return (
      <div className="flex items-center">
        <div className="w-[14px] h-[18px] bg-[#1f7244] text-white text-[11px] font-bold leading-[18px] text-center font-['Liberation_Sans',sans-serif]">x</div>
        <svg width="10" height="21" viewBox="0 0 10 21"><path d="M.5.5h9v20h-9zM.5 5h9M.5 10h9M.5 15h9" fill="#dff0e6" stroke="#1f7244" /></svg>
      </div>
    );
  }
}

function Taskbar() {
  const apps = ["store", "wa", "folder", "chrome", "ie", "e2", "cc", "tv", "b", "mail", "tally", "book", "dia", "vlc", "auto", "xl"];
  const running = ["book", "auto", "xl"];
  return (
    <div className="h-[37px] bg-[#0f1723] flex items-stretch text-white overflow-hidden">
      <div className="w-[45px] flex items-center justify-center"><WinLogo /></div>
      <div className="w-[322px] bg-[#3a3a3a] flex items-center pl-[8px] text-[#bdbdbd]">
        <svg width="21" height="21" viewBox="0 0 21 21"><circle cx="10.500" cy="10.500" r="8.500" fill="none" stroke="#f4f4f4" strokeWidth="2.200" /></svg>
        <span className="ml-[9px] text-[14px] flex-1">Type here to search</span>
        <Mic size={16} color="#b5b5b5" className="mr-[11px]" strokeWidth={1.500} />
      </div>
      <div className="w-[46px] flex items-center justify-center">
        <svg width="21" height="17" viewBox="0 0 21 17"><path d="M5.500.5h10v16h-10zM3 3H.8v11H3M18 3h2.200v11H18" fill="none" stroke="#dcdcdc" strokeWidth="1.200" /></svg>
      </div>
      {apps.map((a) => (
        <div key={a} className={`w-[39px] flex items-center justify-center relative ${a === "xl" ? "bg-[#39424c]" : ""}`}>
          {AppIcon(a)}
          {running.includes(a) ? <div className="absolute left-[2px] right-[2px] bottom-0 h-[2px] bg-[#7ab8e8]" /> : null}
        </div>
      ))}
      <div className="w-[85px] flex items-center gap-[9px] pl-[8px] shrink-0">
        <svg className="shrink-0" width="12" height="7" viewBox="0 0 12 7"><path d="M1 6l5-5 5 5" fill="none" stroke="#ddd" strokeWidth="1.300" /></svg>
        <svg className="shrink-0" width="15" height="14" viewBox="0 0 15 14"><path d="M4 1h10v9H4zM1 4h5v9H1z" fill="none" stroke="#ddd" /></svg>
        <svg className="shrink-0" width="14" height="10" viewBox="0 0 14 10"><path d="M1 2h12v7H1z" fill="none" stroke="#ddd" /><path d="M2 3h8v5H2z" fill="#ddd" /></svg>
        <svg className="shrink-0" width="14" height="14" viewBox="0 0 14 14"><path d="M1 5h2l3-3v10L3 9H1z" fill="none" stroke="#ddd" /><path d="M9 4c1 2 1 4 0 6M11 2.500c1.800 3 1.800 6 0 9" fill="none" stroke="#ddd" /></svg>
      </div>
      <div className="w-[26px] flex flex-col items-center justify-center text-[11.500px] leading-[18px] text-[#e6e6e6] shrink-0 ml-[11px]"><span>ENG</span><span>US</span></div>
      <div className="w-[62px] flex flex-col items-center justify-center text-[11.500px] leading-[18px] text-[#e6e6e6] shrink-0"><span>4:19 PM</span><span className="whitespace-nowrap">30/12/2017</span></div>
      <div className="flex-1 flex items-center justify-center relative">
        <svg className="mb-[8px] mr-[6px]" width="15" height="14" viewBox="0 0 15 14"><path d="M1 1h13v9H5l-3 3v-3H1z" fill="#e8e8e8" /><path d="M3 3.500h9M3 6h9" stroke="#333" /></svg>
        <span className="absolute left-[25px] top-[16px] w-[19px] h-[18px] rounded-full bg-[#4a4f55] border border-[#999] text-[11px] font-bold leading-[16px] text-center">20</span>
      </div>
    </div>
  );
}

export default function App() {
  return (
    <div className="w-[1280px] h-[720px] overflow-hidden bg-[#217346] font-['Roboto',sans-serif] tracking-[-0.1px] flex flex-col blur-[0.5px]">
      <div className="h-[340px] flex flex-col bg-[#217346] pt-[2px]">
        <TitleBar title="entriesregx  [Compatibility Mode]  -  Excel" />
        <TabRow />
        <Ribbon size="12" bold />
        <FormulaArea name="D45" value="Sheet1" h="h-[80px]" />
        <Grid1 />
        <SheetBar tabs={["Entries", "Settings", "Help"]} active="Settings" leftW="w-[500px]" scrollW="w-[746px]" thumbW="w-[449px]" faded />
        <StatusBar pct="85%" pctW="w-[48px]" thumb="left-[38px]" />
      </div>
      <div className="h-[343px] flex flex-col bg-[#217346] border-t-[3px] border-[#17503a] relative">
        <TitleBar title="Sales Sample new  [Read-Only]  -  Excel" inactive />
        <TabRow />
        <div className="absolute left-[542px] top-[17px] text-[#0a12e6] font-bold text-[18.300px] tracking-normal leading-[22px] font-['Liberation_Sans',sans-serif] z-10 whitespace-nowrap">www.thundershare.net</div>
        <Ribbon size="11" />
        <FormulaArea name="" value="123505" h="h-[81px]" />
        <Grid2 />
        <SheetBar tabs={["Sheet1", "Sheet2", "Sheet3"]} active="Sheet1" leftW="w-[767px]" scrollW="w-[479px]" thumbW="w-[419px]" />
        <StatusBar pct="100%" pctW="w-[54px]" thumb="left-[46px]" />
      </div>
      <Taskbar />
    </div>
  );
}
